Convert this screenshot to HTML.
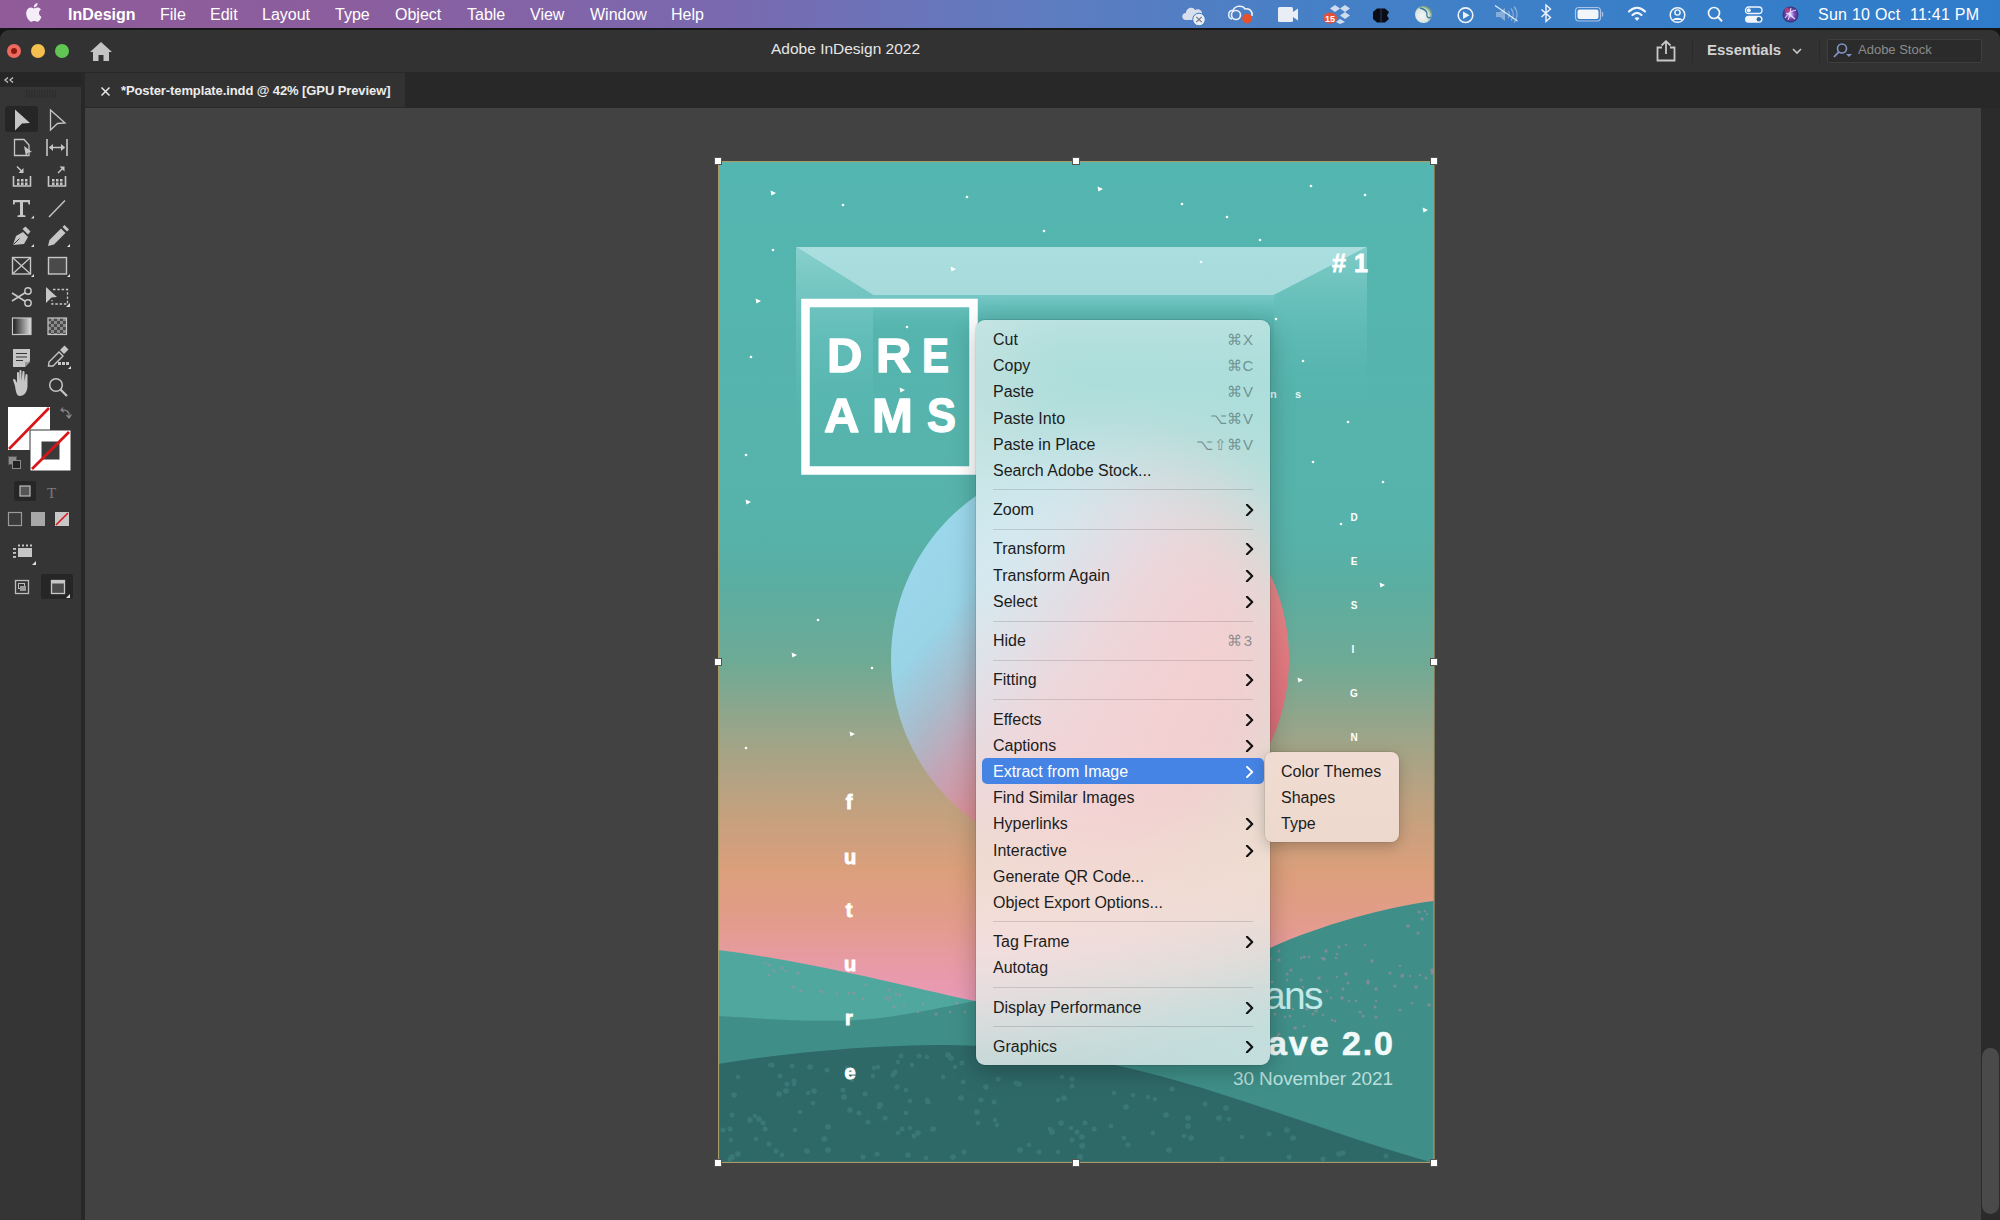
<!DOCTYPE html>
<html><head><meta charset="utf-8">
<style>
*{margin:0;padding:0;box-sizing:border-box}
html,body{width:2000px;height:1220px;overflow:hidden;background:#424242;font-family:"Liberation Sans",sans-serif}
.abs{position:absolute}
#menubar{left:0;top:0;width:2000px;height:28px;background:linear-gradient(90deg,#905b98 0%,#8b5e9e 18%,#7a69b0 36%,#5f7cc0 52%,#4680c6 66%,#3a7fc8 80%,#2f7ccb 100%)}
#menubar .mi{position:absolute;top:5px;color:#fff;font-size:16px;line-height:20px}
#titlebar{left:0;top:30px;width:2000px;height:42px;background:#323232;border-radius:9px 9px 0 0}
#mbline{left:0;top:28px;width:2000px;height:44px;background:#161616}
#tabbar{left:0;top:72px;width:2000px;height:36px;background:#282828}
#toolbar{left:0;top:87px;width:81px;height:1133px;background:#353535}
#tbhead{left:0;top:72px;width:81px;height:14px;background:#262626}
#tbborder{left:81px;top:73px;width:4px;height:1147px;background:#282828}
#tab{left:85px;top:73px;width:320px;height:34px;background:#323232}
#canvas{left:85px;top:108px;width:1896px;height:1112px;background:#424242}
#vscroll{left:1981px;top:108px;width:19px;height:1112px;background:#2b2b2b}
#menu{left:976px;top:320px;width:294px;height:745px;border-radius:9px;overflow:hidden;
 box-shadow:0 6px 24px rgba(0,0,0,.25),0 0 0 1px rgba(0,0,0,.08)}
#mwash{left:0;top:0;width:294px;height:745px;background:linear-gradient(180deg,rgba(246,248,248,0.58) 0%,rgba(246,246,246,0.66) 30%,rgba(246,246,246,0.7) 70%,rgba(248,250,250,0.74) 100%)}
.it{position:absolute;left:17px;width:260px;height:26px;font-size:16px;line-height:28px;color:#1c1c1c}
.sc{position:absolute;right:-2px;top:0;height:26px;color:rgba(40,70,70,0.5);font-size:15px;display:flex}.sc i{font-style:normal;display:block;width:14px;text-align:center}.sc i.o{width:17px}
.ch{position:absolute;right:-1px;top:8px;width:12px;height:12px}
.sep{position:absolute;left:17px;width:260px;height:1px;background:rgba(0,0,0,.13)}
#sub{left:1265px;top:752px;width:134px;height:90px;border-radius:8px;background:linear-gradient(180deg,#f0dcd2,#ecd8cc);box-shadow:0 4px 14px rgba(0,0,0,.22),0 0 0 1px rgba(0,0,0,.06)}
.hd{width:8px;height:8px;background:#fff;border:1px solid #555}
.tl{width:14px;height:14px;border-radius:7px}
#titlebar>*{margin-top:-1px}
</style></head><body>

<div id="menubar" class="abs">
<svg class="abs" style="left:0;top:0" width="2000" height="28" viewBox="0 0 2000 28">
<defs>
<radialGradient id="siri" cx="0.5" cy="0.5" r="0.5"><stop offset="0" stop-color="#e8e0ff"/><stop offset="0.5" stop-color="#7a4cc0"/><stop offset="1" stop-color="#3a3070"/></radialGradient>
<radialGradient id="globe" cx="0.4" cy="0.6" r="0.6"><stop offset="0" stop-color="#f4f4f4"/><stop offset="0.7" stop-color="#d8e6e0"/><stop offset="1" stop-color="#6a9a70"/></radialGradient>
</defs>
<path transform="translate(24.5,3) scale(0.78)" fill="#f5eef8" d="M12.152 6.896c-.948 0-2.415-1.078-3.96-1.04-2.04.027-3.91 1.183-4.961 3.014-2.117 3.675-.546 9.103 1.519 12.09 1.013 1.454 2.208 3.09 3.792 3.039 1.52-.065 2.09-.987 3.935-.987 1.831 0 2.35.987 3.96.948 1.637-.026 2.676-1.48 3.676-2.948 1.156-1.688 1.636-3.325 1.662-3.415-.039-.013-3.182-1.221-3.220-4.857-.026-3.040 2.480-4.494 2.597-4.559-1.429-2.090-3.623-2.324-4.390-2.376-2-.156-3.675 1.090-4.610 1.090zM15.530 3.830c.843-1.012 1.400-2.427 1.245-3.830-1.207.052-2.662.805-3.532 1.818-.780.896-1.454 2.338-1.273 3.714 1.338.104 2.715-.688 3.559-1.701"/>
<!-- cloud x -->
<path d="M1186,20 C1181,20 1181,13 1186,13 C1186,8 1193,6 1195,10 C1199,8 1203,11 1202,15 L1198,20Z" fill="#d7dfec"/>
<circle cx="1199" cy="19.5" r="6.3" fill="#e8ecf2" stroke="#3c7cc4" stroke-width="1"/>
<path d="M1196.3,16.8L1201.7,22.2M1201.7,16.8L1196.3,22.2" stroke="#6a7080" stroke-width="1.1"/>
<!-- cc -->
<path d="M1232,19 C1227,18 1228,10 1233,10.5 C1235,5 1243,5 1245,9 C1250,8 1253,12 1252,16" fill="none" stroke="#eef3fa" stroke-width="1.5"/>
<circle cx="1236" cy="15" r="4.5" fill="none" stroke="#eef3fa" stroke-width="1.6"/>
<circle cx="1247" cy="18.6" r="4.8" fill="#e8502a"/>
<!-- camera -->
<rect x="1278" y="7" width="15" height="15" rx="1.5" fill="#e9eef6"/>
<path d="M1293,12 L1298,8.5 L1298,20.5 L1293,17Z" fill="#e9eef6"/>
<!-- dropbox -->
<g fill="#cfdcef"><path d="M1335,5 L1340,8.5 L1335,12 L1330,8.5Z"/><path d="M1345,5 L1350,8.5 L1345,12 L1340,8.5Z"/><path d="M1345,12 L1350,15.5 L1345,19 L1340,15.5Z"/><path d="M1340,19 L1345,22 L1340,24 L1336,22Z"/></g>
<ellipse cx="1330" cy="18" rx="7" ry="5.5" fill="#e0503a"/>
<text x="1330" y="21.5" font-size="9" font-weight="bold" fill="#fff" text-anchor="middle" font-family="Liberation Sans">15</text>
<!-- shield -->
<path d="M1377,8.5 L1385,8.5 L1389,12 L1387,15.5 L1389,19 L1385,22.5 L1377,22.5 L1373,19 L1373,12Z" fill="#0c0c14"/>
<path d="M1381,9 L1381,22" stroke="#2a3b60" stroke-width="1"/>
<!-- globe -->
<circle cx="1423.6" cy="14.3" r="8.6" fill="url(#globe)"/>
<path d="M1420,8 C1424,9 1427,11 1427,14 C1426,17 1429,19 1431,17" fill="none" stroke="#3a7a9a" stroke-width="1.3"/>
<!-- play -->
<circle cx="1465.5" cy="15.2" r="7.3" fill="none" stroke="#eef4fb" stroke-width="1.6"/>
<path d="M1463,11.5 L1469.5,15.2 L1463,19Z" fill="#eef4fb"/>
<!-- muted speaker -->
<g opacity="0.45" fill="#dfe8f5"><path d="M1496,12 L1500,12 L1505,8 L1505,21 L1500,17 L1496,17Z"/></g>
<g opacity="0.45" fill="none" stroke="#dfe8f5" stroke-width="1.2"><path d="M1508,11 C1510,13 1510,16 1508,18"/><path d="M1511,8.5 C1514,12 1514,17 1511,20.5"/><path d="M1514,6.5 C1518,11 1518,18 1514,22.5"/></g>
<path d="M1495,5.5 L1517.5,21" stroke="#e6eef8" stroke-width="1.1"/>
<!-- bluetooth -->
<path d="M1541.5,9.5 L1550.5,17.5 L1546,21.5 L1546,5 L1550.5,9 L1541.5,17" fill="none" stroke="#f0f5fb" stroke-width="1.4"/>
<!-- battery -->
<rect x="1575.5" y="7.5" width="25" height="13.5" rx="3.5" fill="none" stroke="#a9c4e6" stroke-width="1.2"/>
<rect x="1577.5" y="9.5" width="21" height="9.5" rx="2" fill="#f2f5fa"/>
<path d="M1602.5,12 L1602.5,16.5" stroke="#a9c4e6" stroke-width="1.3"/>
<!-- wifi -->
<g fill="none" stroke="#f2f6fb" stroke-width="2.2" stroke-linecap="round"><path d="M1629,11.5 C1634,6.5 1640,6.5 1645,11.5"/><path d="M1632.5,15 C1635.5,12 1638.5,12 1641.5,15"/></g>
<path d="M1637,21 L1634.5,18 C1636,17 1638,17 1639.5,18Z" fill="#f2f6fb"/>
<!-- user -->
<circle cx="1677.5" cy="15" r="7.3" fill="none" stroke="#f2f6fb" stroke-width="1.5"/>
<circle cx="1677.5" cy="12.5" r="2.6" fill="none" stroke="#f2f6fb" stroke-width="1.4"/>
<path d="M1672.5,20 C1674,17 1681,17 1682.5,20" fill="#f2f6fb"/>
<!-- search -->
<circle cx="1714" cy="13" r="5.5" fill="none" stroke="#f2f6fb" stroke-width="1.7"/>
<path d="M1718,17 L1721.5,20.8" stroke="#f2f6fb" stroke-width="2" stroke-linecap="round"/>
<!-- control center -->
<rect x="1745.5" y="7" width="16.5" height="6.5" rx="3.25" fill="none" stroke="#f2f6fb" stroke-width="1.3"/>
<circle cx="1748.8" cy="10.2" r="2" fill="#f2f6fb"/>
<rect x="1745" y="15.8" width="17.5" height="7" rx="3.5" fill="#f2f6fb"/>
<circle cx="1758.8" cy="19.3" r="2.2" fill="#2d6aa8"/>
<!-- siri -->
<circle cx="1790.5" cy="14.5" r="8" fill="url(#siri)"/>
<path d="M1785,18 C1789,12 1792,11 1796,10 M1786,13 C1790,15 1793,17 1795,19 M1791,8 C1790,12 1790,16 1788,20" stroke="#f6ecff" stroke-width="1.1" fill="none" opacity="0.85"/>
<circle cx="1787" cy="10" r="2.5" fill="#e04070" opacity="0.6"/>
</svg>

  <span class="mi" style="left:68px;font-weight:bold">InDesign</span>
  <span class="mi" style="left:160px">File</span>
  <span class="mi" style="left:210px">Edit</span>
  <span class="mi" style="left:262px">Layout</span>
  <span class="mi" style="left:335px">Type</span>
  <span class="mi" style="left:395px">Object</span>
  <span class="mi" style="left:467px">Table</span>
  <span class="mi" style="left:530px">View</span>
  <span class="mi" style="left:590px">Window</span>
  <span class="mi" style="left:671px">Help</span>
  <span class="mi" style="left:1818px;letter-spacing:0.25px">Sun 10 Oct&nbsp; 11:41 PM</span>
</div>
<div id="mbline" class="abs"></div>
<div id="titlebar" class="abs">
  <div class="abs tl" style="left:7px;top:15px;background:#ee6a5f"><div style="position:absolute;left:4px;top:4px;width:6px;height:6px;border-radius:3px;background:#8c1a10"></div></div>
  <div class="abs tl" style="left:31px;top:15px;background:#f5bf4f"></div>
  <div class="abs tl" style="left:55px;top:15px;background:#61c554"></div>
  <svg class="abs" style="left:89px;top:12px" width="24" height="22" viewBox="0 0 24 22"><path d="M12,1 L23,11 L20,11 L20,20 L14.5,20 L14.5,14 L9.5,14 L9.5,20 L4,20 L4,11 L1,11 Z" fill="#c4c4c4"/></svg>
  <div class="abs" style="left:771px;top:10px;font-size:15.5px;color:#e6e6e6;line-height:20px">Adobe InDesign 2022</div>
  <svg class="abs" style="left:1654px;top:11px" width="24" height="22" viewBox="0 0 24 22"><path d="M8,7.5 L3.5,7.5 L3.5,20.5 L20.5,20.5 L20.5,7.5 L16,7.5 M12,14 L12,1.5 M7.5,5.5 L12,1.2 L16.5,5.5" fill="none" stroke="#c8c8c8" stroke-width="1.8"/></svg>
  <div class="abs" style="left:1692px;top:10px;width:1px;height:24px;background:#2a2a2a"></div>
  <div class="abs" style="left:1707px;top:11px;font-size:15px;font-weight:bold;color:#d2d2d2;line-height:20px">Essentials</div>
  <svg class="abs" style="left:1791px;top:17px" width="12" height="10" viewBox="0 0 12 10"><path d="M2,3 L6,7 L10,3" fill="none" stroke="#c8c8c8" stroke-width="1.6"/></svg>
  <div class="abs" style="left:1819px;top:10px;width:1px;height:24px;background:#2a2a2a"></div>
  <div class="abs" style="left:1827px;top:10px;width:155px;height:24px;border:1px solid #3e3e3e;border-radius:2px;background:#2b2b2b"></div>
  <svg class="abs" style="left:1832px;top:13px" width="22" height="18" viewBox="0 0 22 18"><circle cx="10" cy="6.5" r="4.5" fill="none" stroke="#7f95c8" stroke-width="1.6"/><path d="M6.8,9.8 L2,15" stroke="#7f95c8" stroke-width="1.8"/><path d="M14,12 L20,12 L17,15Z" fill="#7f95c8"/></svg>
  <div class="abs" style="left:1858px;top:13px;font-size:13px;color:#8c8c8c;line-height:16px">Adobe Stock</div>
</div>
<div id="tabbar" class="abs"></div>
<div id="tbhead" class="abs"><svg class="abs" style="left:3px;top:4px" width="12" height="8" viewBox="0 0 12 8"><path d="M5,1.5L2,4L5,6.5M10,1.5L7,4L10,6.5" fill="none" stroke="#c4c4c4" stroke-width="1.3"/></svg></div>
<div id="toolbar" class="abs"></div>
<svg class="abs" style="left:0;top:87px" width="82" height="540" viewBox="0 87 82 540">
<defs>
<linearGradient id="gsw" x1="0" y1="0" x2="1" y2="0"><stop offset="0" stop-color="#1a1a1a"/><stop offset="1" stop-color="#e0e0e0"/></linearGradient>
<pattern id="chk" width="6" height="6" patternUnits="userSpaceOnUse" x="48" y="318"><rect width="6" height="6" fill="#8a8a8a"/><rect width="3" height="3" fill="#4a4a4a"/><rect x="3" y="3" width="3" height="3" fill="#4a4a4a"/></pattern>
</defs>
<g fill="#c6c6c6" stroke="#c6c6c6">
<rect x="5" y="106" width="33" height="26" rx="3" fill="#262626" stroke="none"/>
<path d="M15,109.5 L30,123 L22,123.5 L15,130.5Z" stroke="none"/>
<path d="M50.5,110 L65,123 L57.5,123.5 L50.5,130Z" fill="none" stroke-width="1.3"/>
<!-- page tool -->
<path d="M14.5,139.5 L24,139.5 L29,145 L29,155.5 L14.5,155.5Z" fill="none" stroke-width="1.3"/>
<path d="M24,146 L32,152 L28,152.5 L26,156.5Z" stroke="none"/>
<!-- gap tool -->
<path d="M47,139 L47,156 M67,139 L67,156 M49.5,147.5 L64.5,147.5" fill="none" stroke-width="1.6"/>
<path d="M49,147.5 L53,144 L53,151Z M65,147.5 L61,144 L61,151Z" stroke="none"/>
<!-- content collector -->
<path d="M13.5,176 L13.5,186 L30.5,186 L30.5,176" fill="none" stroke-width="1.6"/>
<g stroke="none"><rect x="17" y="179" width="2.5" height="2.5"/><rect x="21" y="179" width="2.5" height="2.5"/><rect x="25" y="179" width="2.5" height="2.5"/><rect x="17" y="182.5" width="2.5" height="2.5"/><rect x="21" y="182.5" width="2.5" height="2.5"/><rect x="25" y="182.5" width="2.5" height="2.5"/></g>
<path d="M17,166.5 L22.5,172" fill="none" stroke-width="1.5"/><path d="M23.5,173 L23.5,168 L18.5,173Z" stroke="none"/>
<path d="M48.5,176 L48.5,186 L65.5,186 L65.5,176" fill="none" stroke-width="1.6"/>
<g stroke="none"><rect x="52" y="179" width="2.5" height="2.5"/><rect x="56" y="179" width="2.5" height="2.5"/><rect x="60" y="179" width="2.5" height="2.5"/><rect x="52" y="182.5" width="2.5" height="2.5"/><rect x="56" y="182.5" width="2.5" height="2.5"/><rect x="60" y="182.5" width="2.5" height="2.5"/></g>
<path d="M58,173 L63.5,167.5" fill="none" stroke-width="1.5"/><path d="M64.5,166.5 L64.5,171.5 L59.5,166.5Z" stroke="none"/>
<!-- type -->
<path d="M13,200 L30,200 L30,204.5 L28.5,204.5 L28,202.3 L23,202.3 L23,215 L25.5,215.5 L25.5,217 L17.5,217 L17.5,215.5 L20,215 L20,202.3 L15,202.3 L14.5,204.5 L13,204.5Z" stroke="none"/>
<path d="M31,218.5 L34,215.5 L34,218.5Z" stroke="none" fill="#e0e0e0"/>
<path d="M49,217 L65,200.5" fill="none" stroke-width="1.4"/>
<!-- pen -->
<path d="M13,245 L16,236 L23,232 L28,237 L24,244Z" stroke="none"/>
<path d="M22.5,229 L25.5,226.5 L30.5,231.5 L28,234.5Z" stroke="none"/>
<path d="M13.5,244.5 L19.5,238.5" stroke="#353535" stroke-width="1"/>
<path d="M31,247 L34,244 L34,247Z" stroke="none" fill="#e0e0e0"/>
<!-- pencil -->
<path d="M48,246 L49.5,240 L61,228.5 L65.5,233 L54,244.5Z" stroke="none"/>
<path d="M62.5,227 L64.5,225 L69,229.5 L67,231.5Z" stroke="none"/>
<path d="M67,247 L70,244 L70,247Z" stroke="none" fill="#e0e0e0"/>
<!-- rect frame -->
<rect x="12.5" y="257.5" width="18" height="16.5" fill="none" stroke-width="1.4"/>
<path d="M12.5,257.5 L30.5,274 M30.5,257.5 L12.5,274" fill="none" stroke-width="1.3"/>
<path d="M31,277 L34,274 L34,277Z" stroke="none" fill="#e0e0e0"/>
<rect x="48.5" y="257.5" width="18" height="16.5" fill="#4a4a4a" stroke-width="1.4"/>
<path d="M67,277 L70,274 L70,277Z" stroke="none" fill="#e0e0e0"/>
<!-- scissors -->
<circle cx="28" cy="291" r="3.2" fill="none" stroke-width="1.4"/><circle cx="28" cy="303" r="3.2" fill="none" stroke-width="1.4"/>
<path d="M12,293 L25.5,301.5 M12,301 L25.5,292.5" fill="none" stroke-width="1.7"/>
<!-- free transform -->
<path d="M46,287 L57,297 L51.5,297.5 L46,303Z" stroke="none"/>
<path d="M53,289.5 L67.5,289.5 L67.5,304 L52,304 L52,300" fill="none" stroke-width="1.3" stroke-dasharray="2.5,1.8"/>
<path d="M66,307 L70,303 L70,307Z" stroke="none" fill="#e0e0e0"/>
<!-- gradient swatch -->
<rect x="12.5" y="318" width="18.5" height="16.5" fill="url(#gsw)" stroke-width="1.2"/>
<rect x="48" y="318" width="18.5" height="16.5" fill="url(#chk)" stroke-width="1.2"/>
<!-- note -->
<path d="M13,349 L30,349 L30,361 L25,367 L13,367Z" stroke="none"/>
<path d="M16,353.5 L27,353.5 M16,357 L27,357 M16,360.5 L23,360.5" stroke="#353535" stroke-width="1.2"/>
<path d="M25,367 L25,362 L30,362Z" stroke="none" fill="#9a9a9a"/>
<!-- eyedropper -->
<path d="M48.5,366 L49,362 L59,352 L63,356 L53,366Z" fill="none" stroke-width="1.4"/>
<path d="M60,350 L64.5,345.5 L68.5,349.5 L64,354Z" stroke="none"/>
<g stroke="none"><rect x="58" y="362" width="3" height="3"/><rect x="62" y="362" width="3" height="3"/><rect x="66" y="362" width="3" height="3"/></g>
<path d="M68,369 L71,366 L71,369Z" stroke="none" fill="#e0e0e0"/>
<!-- hand -->
<path d="M15,386 L13,380 C13,378.5 15,378.5 15.5,380 L17,383 L17,373 C17,371.5 19,371.5 19,373 L19,381 L19.5,371 C19.5,369.5 21.5,369.5 21.5,371 L21.5,381 L22.5,372 C22.5,370.5 24.5,370.5 24.5,372 L24.5,381.5 L25.5,375 C25.5,373.5 27.5,373.5 27.5,375 L27.5,386 C27.5,392 24,396 20,396 C17,396 16,393 15,386Z" stroke="none"/>
<!-- zoom -->
<circle cx="56" cy="385" r="6.3" fill="none" stroke-width="1.5"/>
<path d="M60.5,389.5 L67,396" fill="none" stroke-width="2.2"/>
</g>
<!-- fill / stroke -->
<rect x="8" y="407" width="42" height="43" fill="#fff"/>
<path d="M9,449 L49,408" stroke="#d8151b" stroke-width="2.6"/>
<rect x="30" y="430" width="41" height="41" fill="#fff" stroke="#353535" stroke-width="1"/>
<rect x="41.5" y="441.5" width="18" height="18" fill="#3a3a3a"/>
<path d="M32,469 L69,432" stroke="#d8151b" stroke-width="2.6"/>
<path d="M62,410 C66,409 70,412 69,417 M66.5,415 L69,418 L71.5,414.5 M63,407.5 L61,410 L64,412" fill="none" stroke="#8a8a8a" stroke-width="1.2"/>
<rect x="8.5" y="456.5" width="8" height="8" fill="#8a8a8a" stroke="#555" stroke-width="1"/>
<rect x="12.5" y="460.5" width="8" height="8" fill="#222" stroke="#8a8a8a" stroke-width="1"/>
<!-- formatting -->
<rect x="14" y="481" width="22" height="20" rx="2" fill="#262626"/>
<rect x="20" y="486" width="10" height="10" fill="#555" stroke="#bbb" stroke-width="1.2"/>
<text x="47" y="498" font-family="Liberation Serif" font-size="15" fill="#7a7a7a">T</text>
<!-- apply color -->
<rect x="8.5" y="512.5" width="13" height="13" fill="#3a3a3a" stroke="#9a9a9a" stroke-width="1.2"/>
<rect x="31" y="512" width="14" height="14" fill="#a8a8a8"/>
<rect x="55" y="512" width="14" height="14" fill="#c8c8c8"/>
<path d="M56,525 L68,513" stroke="#d8151b" stroke-width="1.6"/>
<!-- screen mode -->
<g fill="#c6c6c6"><rect x="18" y="548" width="14" height="9"/><rect x="13" y="548" width="3" height="1.8"/><rect x="13" y="552" width="3" height="1.8"/><rect x="13" y="556" width="3" height="1.8"/><rect x="18" y="544.5" width="2" height="2"/><rect x="22" y="544.5" width="2" height="2"/><rect x="26" y="544.5" width="2" height="2"/><rect x="30" y="544.5" width="2" height="2"/></g>
<path d="M32,565 L36,561 L36,565Z" fill="#e0e0e0"/>
<!-- view -->
<rect x="15.5" y="580.5" width="13" height="13" fill="none" stroke="#bcbcbc" stroke-width="1.3"/>
<rect x="18.5" y="583.5" width="6" height="5" fill="none" stroke="#bcbcbc" stroke-width="1"/><rect x="20" y="586" width="6" height="5" fill="#9a9a9a"/>
<rect x="41" y="574" width="32" height="25" rx="2" fill="#262626"/>
<rect x="51.5" y="580.5" width="13" height="13" fill="#4a4a4a" stroke="#c6c6c6" stroke-width="1.3"/>
<rect x="51.5" y="580.5" width="13" height="3" fill="#c6c6c6"/>
<path d="M66,598 L70,594 L70,598Z" fill="#e0e0e0"/>
</svg>

<svg class="abs" style="left:0;top:87px" width="81" height="14" viewBox="0 87 81 14"><rect x="26.0" y="90" width="1.2" height="8" fill="#2d2d2d"/><rect x="28.6" y="90" width="1.2" height="8" fill="#2d2d2d"/><rect x="31.2" y="90" width="1.2" height="8" fill="#2d2d2d"/><rect x="33.8" y="90" width="1.2" height="8" fill="#2d2d2d"/><rect x="36.4" y="90" width="1.2" height="8" fill="#2d2d2d"/><rect x="39.0" y="90" width="1.2" height="8" fill="#2d2d2d"/><rect x="41.6" y="90" width="1.2" height="8" fill="#2d2d2d"/><rect x="44.2" y="90" width="1.2" height="8" fill="#2d2d2d"/><rect x="46.8" y="90" width="1.2" height="8" fill="#2d2d2d"/><rect x="49.4" y="90" width="1.2" height="8" fill="#2d2d2d"/><rect x="52.0" y="90" width="1.2" height="8" fill="#2d2d2d"/><rect x="54.6" y="90" width="1.2" height="8" fill="#2d2d2d"/></svg>
<div id="tbborder" class="abs"></div>
<div id="tab" class="abs">
  <svg class="abs" style="left:15px;top:13px" width="11" height="11" viewBox="0 0 11 11"><path d="M1.5,1.5L9.5,9.5M9.5,1.5L1.5,9.5" stroke="#eaeaea" stroke-width="1.5"/></svg>
  <div class="abs" style="left:36px;top:10px;font-size:13px;font-weight:bold;color:#ececec;line-height:16px;letter-spacing:-0.1px">*Poster-template.indd @ 42% [GPU Preview]</div>
</div>
<div id="canvas" class="abs"></div>
<div id="vscroll" class="abs"><div class="abs" style="left:1px;top:940px;width:17px;height:166px;border-radius:8.5px;background:#4a4a4a"></div></div>

<!-- POSTER -->
<svg class="abs" style="left:718px;top:161px" width="717" height="1002" viewBox="718 161 717 1002">
<defs>
<linearGradient id="bg" x1="0" y1="0" x2="0" y2="1">
<stop offset="0" stop-color="#54b6b1"/><stop offset="0.36" stop-color="#56b3ab"/><stop offset="0.42" stop-color="#5aaea2"/>
<stop offset="0.50" stop-color="#6eaa95"/><stop offset="0.58" stop-color="#a0a487"/><stop offset="0.65" stop-color="#c3a17f"/><stop offset="0.71" stop-color="#dc9f7b"/>
<stop offset="0.76" stop-color="#e39c8c"/><stop offset="0.81" stop-color="#e89aaa"/><stop offset="0.86" stop-color="#ea9ac2"/><stop offset="1" stop-color="#ea9ac2"/>
</linearGradient>
<linearGradient id="topband" x1="0" y1="0" x2="0" y2="1"><stop offset="0" stop-color="#aadedf"/><stop offset="1" stop-color="#a6dadb"/></linearGradient>
<linearGradient id="lwall" x1="0" y1="0" x2="0" y2="1"><stop offset="0" stop-color="#88d0cd"/><stop offset="0.35" stop-color="#66bfbb" stop-opacity="0.7"/><stop offset="0.75" stop-color="#56b6b1" stop-opacity="0"/></linearGradient>
<linearGradient id="rwall" x1="0" y1="0" x2="0" y2="1"><stop offset="0" stop-color="#80ccc9"/><stop offset="0.25" stop-color="#6cc2be" stop-opacity="0.6"/><stop offset="0.6" stop-color="#56b6b1" stop-opacity="0"/></linearGradient>
<linearGradient id="under" x1="0" y1="0" x2="0" y2="1"><stop offset="0" stop-color="#76c8c5"/><stop offset="1" stop-color="#56b6b1" stop-opacity="0"/></linearGradient>
<linearGradient id="circ" x1="0.1" y1="0.15" x2="0.9" y2="0.85">
<stop offset="0" stop-color="#9cd8ec"/><stop offset="0.18" stop-color="#98d3e6"/><stop offset="0.3" stop-color="#a9bccc"/><stop offset="0.42" stop-color="#c6a2b2"/><stop offset="0.55" stop-color="#dd8c93"/><stop offset="0.7" stop-color="#e6898a"/><stop offset="0.85" stop-color="#e27a80"/><stop offset="1" stop-color="#d86a78"/>
</linearGradient>
</defs>
<g id="pbase">
<rect x="718" y="161" width="716" height="1002" fill="url(#bg)"/>
<!-- box -->
<path d="M796,247L1367,247L1274,295L873,295Z" fill="url(#topband)"/>
<path d="M796,247L873,295L873,520L796,520Z" fill="url(#lwall)"/>
<path d="M1367,247L1274,295L1274,520L1367,520Z" fill="url(#rwall)"/>
<rect x="873" y="295" width="401" height="40" fill="url(#under)"/>
<!-- circle -->
<circle cx="1090" cy="659" r="199" fill="url(#circ)"/>
<!-- hills -->
<path d="M718,950 C800,960 890,982 960,998 L1000,1006 L1000,1163 L718,1163Z" fill="#4fa79e"/>
<path d="M718,1016 C770,1019 830,1024 880,1018 C940,1010 980,998 1040,990 C1120,978 1200,962 1270,948 C1320,925 1390,906 1434,901 L1434,1163 L718,1163Z" fill="#3f8f88"/>
<g fill="#b28c9c" opacity="0.55"><circle cx="1313" cy="1014" r="1.5"/><circle cx="1290" cy="1016" r="1.5"/><circle cx="1360" cy="1012" r="1.5"/><circle cx="1293" cy="1009" r="1.2"/><circle cx="1322" cy="958" r="1.2"/><circle cx="1416" cy="987" r="1.8"/><circle cx="1304" cy="957" r="1.5"/><circle cx="1316" cy="1011" r="1.8"/><circle cx="1400" cy="1010" r="1.5"/><circle cx="1336" cy="958" r="1.2"/><circle cx="1291" cy="970" r="1.5"/><circle cx="1429" cy="1005" r="1.8"/><circle cx="1410" cy="976" r="1.2"/><circle cx="1295" cy="1028" r="1.8"/><circle cx="1376" cy="1001" r="1.2"/><circle cx="1270" cy="959" r="1.2"/><circle cx="1376" cy="989" r="1.8"/><circle cx="1342" cy="998" r="1.8"/><circle cx="1301" cy="958" r="1.2"/><circle cx="1272" cy="1038" r="1.8"/><circle cx="1408" cy="926" r="1.8"/><circle cx="1311" cy="994" r="1.5"/><circle cx="1279" cy="960" r="1.8"/><circle cx="1339" cy="947" r="1.5"/><circle cx="1307" cy="1009" r="1.8"/><circle cx="1335" cy="1021" r="1.2"/><circle cx="1304" cy="1026" r="1.2"/><circle cx="1346" cy="945" r="1.2"/><circle cx="1426" cy="978" r="1.5"/><circle cx="1419" cy="912" r="1.5"/><circle cx="1279" cy="951" r="1.5"/><circle cx="1279" cy="1034" r="1.5"/><circle cx="1390" cy="973" r="1.5"/><circle cx="1301" cy="980" r="1.5"/><circle cx="1275" cy="1014" r="1.5"/><circle cx="1343" cy="989" r="1.5"/><circle cx="1427" cy="914" r="1.2"/><circle cx="1332" cy="1020" r="1.2"/><circle cx="1278" cy="1035" r="1.2"/><circle cx="1323" cy="1015" r="1.2"/><circle cx="1403" cy="975" r="1.2"/><circle cx="1402" cy="976" r="1.8"/><circle cx="1326" cy="951" r="1.8"/><circle cx="1277" cy="992" r="1.5"/><circle cx="1319" cy="978" r="1.8"/><circle cx="1425" cy="911" r="1.2"/><circle cx="1348" cy="983" r="1.5"/><circle cx="1400" cy="966" r="1.2"/><circle cx="1422" cy="919" r="1.8"/><circle cx="1320" cy="999" r="1.5"/><circle cx="1346" cy="974" r="1.8"/><circle cx="1302" cy="996" r="1.2"/><circle cx="1349" cy="1001" r="1.2"/><circle cx="1432" cy="971" r="1.5"/><circle cx="1432" cy="973" r="1.5"/><circle cx="1372" cy="961" r="1.8"/><circle cx="1395" cy="986" r="1.5"/><circle cx="1331" cy="998" r="1.2"/><circle cx="1309" cy="957" r="1.2"/><circle cx="1324" cy="959" r="1.8"/><circle cx="1356" cy="1001" r="1.2"/><circle cx="1287" cy="974" r="1.5"/><circle cx="1420" cy="975" r="1.2"/><circle cx="1368" cy="983" r="1.8"/><circle cx="1412" cy="1003" r="1.2"/><circle cx="1287" cy="980" r="1.2"/><circle cx="1276" cy="1039" r="1.2"/><circle cx="1368" cy="981" r="1.5"/><circle cx="1337" cy="954" r="1.2"/><circle cx="1303" cy="987" r="1.2"/><circle cx="1337" cy="977" r="1.2"/><circle cx="1375" cy="1007" r="1.5"/><circle cx="1432" cy="970" r="1.8"/><circle cx="1363" cy="1016" r="1.5"/><circle cx="1376" cy="1017" r="1.5"/><circle cx="1418" cy="933" r="1.5"/><circle cx="1365" cy="945" r="1.2"/><circle cx="1272" cy="982" r="1.5"/><circle cx="1285" cy="1017" r="1.2"/><circle cx="1327" cy="991" r="1.5"/><circle cx="863" cy="999" r="1.2"/><circle cx="823" cy="992" r="1.2"/><circle cx="965" cy="1012" r="1.2"/><circle cx="888" cy="1000" r="1.2"/><circle cx="950" cy="1012" r="1.2"/><circle cx="894" cy="1007" r="1.5"/><circle cx="889" cy="990" r="1.5"/><circle cx="798" cy="973" r="1.5"/><circle cx="957" cy="1003" r="1.5"/><circle cx="786" cy="971" r="1.2"/><circle cx="769" cy="975" r="1.2"/><circle cx="900" cy="995" r="1.5"/><circle cx="886" cy="998" r="1.5"/><circle cx="896" cy="994" r="1.2"/><circle cx="849" cy="993" r="1.5"/><circle cx="866" cy="985" r="1.2"/><circle cx="890" cy="997" r="1.2"/><circle cx="854" cy="993" r="1.5"/><circle cx="936" cy="1014" r="1.5"/><circle cx="782" cy="968" r="1.5"/><circle cx="837" cy="994" r="1.2"/><circle cx="769" cy="965" r="1.5"/><circle cx="923" cy="1004" r="1.2"/><circle cx="918" cy="1012" r="1.2"/><circle cx="765" cy="963" r="1.2"/><circle cx="801" cy="991" r="1.5"/><circle cx="820" cy="991" r="1.2"/><circle cx="904" cy="1005" r="1.2"/><circle cx="774" cy="971" r="1.5"/><circle cx="793" cy="987" r="1.5"/></g>
<path d="M718,1064 C780,1054 860,1045 950,1045 C1030,1046 1100,1060 1160,1076 C1250,1100 1350,1140 1434,1163 L718,1163Z" fill="#2e6968"/>
<rect x="805.5" y="303" width="168" height="167.5" fill="none" stroke="#fff" stroke-width="8.5"/>
</g>
<g fill="#4a8c89" opacity="0.45"><circle cx="951" cy="1058" r="2.8"/><circle cx="756" cy="1139" r="2.2"/><circle cx="786" cy="1091" r="2.8"/><circle cx="810" cy="1067" r="2.8"/><circle cx="879" cy="1107" r="2.2"/><circle cx="927" cy="1057" r="2.2"/><circle cx="1126" cy="1107" r="2.8"/><circle cx="850" cy="1110" r="2.8"/><circle cx="1226" cy="1108" r="2.8"/><circle cx="868" cy="1122" r="2.5"/><circle cx="898" cy="1062" r="2.2"/><circle cx="780" cy="1076" r="2.5"/><circle cx="926" cy="1158" r="2.2"/><circle cx="964" cy="1152" r="2.5"/><circle cx="750" cy="1120" r="2.8"/><circle cx="1128" cy="1145" r="2.5"/><circle cx="963" cy="1082" r="2.5"/><circle cx="1133" cy="1095" r="2.2"/><circle cx="1219" cy="1118" r="2.8"/><circle cx="995" cy="1120" r="2.2"/><circle cx="1155" cy="1099" r="2.2"/><circle cx="897" cy="1087" r="2.5"/><circle cx="779" cy="1094" r="2.8"/><circle cx="919" cy="1056" r="2.5"/><circle cx="1016" cy="1083" r="2.5"/><circle cx="847" cy="1068" r="2.2"/><circle cx="731" cy="1140" r="2.2"/><circle cx="1019" cy="1084" r="2.8"/><circle cx="948" cy="1055" r="2.8"/><circle cx="1339" cy="1154" r="2.8"/><circle cx="770" cy="1065" r="2.2"/><circle cx="800" cy="1112" r="2.2"/><circle cx="794" cy="1084" r="2.2"/><circle cx="772" cy="1065" r="2.5"/><circle cx="827" cy="1070" r="2.5"/><circle cx="1148" cy="1097" r="2.2"/><circle cx="1323" cy="1159" r="2.5"/><circle cx="1062" cy="1077" r="2.2"/><circle cx="794" cy="1081" r="2.5"/><circle cx="1061" cy="1123" r="2.8"/><circle cx="738" cy="1154" r="2.8"/><circle cx="978" cy="1123" r="2.2"/><circle cx="880" cy="1105" r="2.8"/><circle cx="955" cy="1067" r="2.2"/><circle cx="1293" cy="1138" r="2.8"/><circle cx="1071" cy="1128" r="2.2"/><circle cx="859" cy="1113" r="2.5"/><circle cx="1039" cy="1152" r="2.5"/><circle cx="878" cy="1067" r="2.2"/><circle cx="961" cy="1098" r="2.8"/><circle cx="1184" cy="1136" r="2.2"/><circle cx="997" cy="1125" r="2.2"/><circle cx="1289" cy="1157" r="2.5"/><circle cx="1050" cy="1129" r="2.2"/><circle cx="825" cy="1139" r="2.5"/><circle cx="732" cy="1157" r="2.8"/><circle cx="795" cy="1130" r="2.2"/><circle cx="1029" cy="1145" r="2.2"/><circle cx="1077" cy="1132" r="2.5"/><circle cx="906" cy="1090" r="2.2"/><circle cx="765" cy="1129" r="2.5"/><circle cx="1191" cy="1138" r="2.8"/><circle cx="1020" cy="1150" r="2.8"/><circle cx="1083" cy="1145" r="2.2"/><circle cx="1153" cy="1133" r="2.2"/><circle cx="844" cy="1097" r="2.8"/><circle cx="1205" cy="1104" r="2.5"/><circle cx="918" cy="1133" r="2.8"/><circle cx="953" cy="1157" r="2.8"/><circle cx="1085" cy="1123" r="2.5"/><circle cx="1082" cy="1137" r="2.8"/><circle cx="1343" cy="1153" r="2.5"/><circle cx="865" cy="1094" r="2.5"/><circle cx="808" cy="1093" r="2.2"/><circle cx="873" cy="1076" r="2.2"/><circle cx="1229" cy="1119" r="2.2"/><circle cx="901" cy="1056" r="2.5"/><circle cx="877" cy="1154" r="2.5"/><circle cx="1222" cy="1159" r="2.5"/><circle cx="962" cy="1063" r="2.5"/><circle cx="787" cy="1084" r="2.5"/><circle cx="1114" cy="1093" r="2.2"/><circle cx="994" cy="1102" r="2.5"/><circle cx="814" cy="1091" r="2.8"/><circle cx="828" cy="1150" r="2.8"/><circle cx="1072" cy="1079" r="2.5"/><circle cx="763" cy="1123" r="2.5"/><circle cx="906" cy="1113" r="2.2"/><circle cx="769" cy="1144" r="2.5"/><circle cx="730" cy="1159" r="2.5"/><circle cx="813" cy="1103" r="2.2"/><circle cx="1386" cy="1156" r="2.5"/><circle cx="943" cy="1077" r="2.2"/><circle cx="927" cy="1100" r="2.2"/><circle cx="914" cy="1136" r="2.5"/><circle cx="1080" cy="1157" r="2.8"/><circle cx="1058" cy="1152" r="2.2"/><circle cx="1188" cy="1118" r="2.8"/><circle cx="1072" cy="1140" r="2.5"/><circle cx="874" cy="1068" r="2.2"/><circle cx="1172" cy="1089" r="2.5"/><circle cx="732" cy="1115" r="2.5"/><circle cx="1080" cy="1157" r="2.8"/><circle cx="893" cy="1075" r="2.5"/><circle cx="853" cy="1072" r="2.2"/><circle cx="908" cy="1155" r="2.8"/><circle cx="852" cy="1080" r="2.2"/><circle cx="1058" cy="1100" r="2.2"/><circle cx="898" cy="1133" r="2.2"/><circle cx="738" cy="1077" r="2.2"/><circle cx="782" cy="1155" r="2.2"/><circle cx="1188" cy="1126" r="2.8"/><circle cx="998" cy="1079" r="2.5"/><circle cx="828" cy="1127" r="2.8"/><circle cx="824" cy="1139" r="2.8"/><circle cx="1242" cy="1137" r="2.2"/><circle cx="1124" cy="1138" r="2.2"/><circle cx="1166" cy="1115" r="2.8"/><circle cx="895" cy="1072" r="2.5"/><circle cx="1287" cy="1130" r="2.8"/><circle cx="1094" cy="1129" r="2.5"/><circle cx="910" cy="1128" r="2.2"/><circle cx="885" cy="1118" r="2.5"/><circle cx="1072" cy="1086" r="2.5"/><circle cx="755" cy="1116" r="2.2"/><circle cx="902" cy="1129" r="2.5"/><circle cx="1064" cy="1098" r="2.8"/><circle cx="792" cy="1066" r="2.5"/><circle cx="928" cy="1102" r="2.5"/><circle cx="1052" cy="1132" r="2.8"/><circle cx="863" cy="1157" r="2.5"/><circle cx="734" cy="1095" r="2.8"/><circle cx="912" cy="1065" r="2.2"/><circle cx="977" cy="1112" r="2.8"/><circle cx="1082" cy="1146" r="2.8"/><circle cx="981" cy="1100" r="2.5"/><circle cx="1001" cy="1059" r="2.5"/><circle cx="988" cy="1055" r="2.5"/><circle cx="723" cy="1130" r="2.5"/><circle cx="807" cy="1151" r="2.8"/><circle cx="730" cy="1129" r="2.5"/><circle cx="986" cy="1087" r="2.8"/><circle cx="776" cy="1151" r="2.5"/><circle cx="759" cy="1119" r="2.8"/><circle cx="910" cy="1101" r="2.2"/><circle cx="1269" cy="1134" r="2.5"/><circle cx="1169" cy="1150" r="2.8"/><circle cx="1111" cy="1126" r="2.2"/><circle cx="843" cy="1090" r="2.5"/><circle cx="933" cy="1129" r="2.8"/></g>
<g fill="#ffffff"><path d="M770.5,190.5L776,193L771.5,195.5Z"/><circle cx="843" cy="205" r="1.3"/><circle cx="967" cy="197" r="1.3"/><circle cx="773" cy="250" r="1.3"/><path d="M755.5,298.5L761,301L756.5,303.5Z"/><circle cx="751" cy="357" r="1.3"/><circle cx="746" cy="455" r="1.3"/><circle cx="1044" cy="231" r="1.3"/><path d="M950.5,266.5L956,269L951.5,271.5Z"/><circle cx="907" cy="327" r="1.3"/><path d="M1097.5,186.5L1103,189L1098.5,191.5Z"/><circle cx="1182" cy="204" r="1.3"/><circle cx="1311" cy="186" r="1.3"/><circle cx="1365" cy="195" r="1.3"/><path d="M1422.5,207.5L1428,210L1423.5,212.5Z"/><circle cx="1227" cy="217" r="1.3"/><circle cx="1303" cy="361" r="1.3"/><circle cx="1348" cy="422" r="1.3"/><circle cx="1313" cy="462" r="1.3"/><circle cx="1383" cy="482" r="1.3"/><circle cx="1276" cy="319" r="1.3"/><path d="M745.5,499.5L751,502L746.5,504.5Z"/><circle cx="818" cy="620" r="1.3"/><path d="M791.5,652.5L797,655L792.5,657.5Z"/><circle cx="872" cy="668" r="1.3"/><path d="M849.5,731.5L855,734L850.5,736.5Z"/><circle cx="746" cy="748" r="1.3"/><circle cx="1341" cy="524" r="1.3"/><path d="M1379.5,582.5L1385,585L1380.5,587.5Z"/><path d="M1297.5,677.5L1303,680L1298.5,682.5Z"/><path d="M899.5,387.5L905,390L900.5,392.5Z"/><circle cx="1201" cy="262" r="1.3"/><circle cx="1260" cy="240" r="1.3"/></g>
<!-- DREAMS frame -->
<g fill="#fff" stroke="#fff" stroke-width="1.4" stroke-linejoin="round" font-family="Liberation Sans" font-weight="bold" font-size="49">
<text x="827" y="372">D</text><text x="876" y="372">R</text><text x="922" y="372" textLength="27" lengthAdjust="spacingAndGlyphs">E</text>
<text x="824" y="432">A</text><text x="872" y="432">M</text><text x="927" y="432" textLength="29" lengthAdjust="spacingAndGlyphs">S</text>
</g>
<text x="1332" y="272" fill="#fff" stroke="#fff" stroke-width="0.8" font-family="Liberation Sans" font-weight="bold" font-size="25">#</text>
<text x="1354" y="272" fill="#fff" stroke="#fff" stroke-width="0.8" font-family="Liberation Sans" font-weight="bold" font-size="25">1</text>
<g fill="#fff" stroke="#fff" stroke-width="0.9" font-family="Liberation Sans" font-weight="bold" font-size="20" text-anchor="middle">
<text x="849" y="809">f</text><text x="850" y="864">u</text><text x="849" y="917">t</text><text x="850" y="971">u</text><text x="849" y="1025">r</text><text x="850" y="1079">e</text>
</g>
<g fill="#fff" font-family="Liberation Sans" font-weight="bold" font-size="10" text-anchor="middle">
<text x="1354" y="521">D</text><text x="1354" y="565">E</text><text x="1354" y="609">S</text><text x="1353" y="653">I</text><text x="1354" y="697">G</text><text x="1354" y="741">N</text>
</g>
<g fill="#e8f6f6" font-family="Liberation Sans" font-size="11" font-weight="bold"><text x="1270" y="398">n</text><text x="1295" y="398">s</text></g>
<text x="1264" y="1009" fill="#c4eaea" font-family="Liberation Sans" font-size="39" letter-spacing="-1.5" textLength="58">ans</text>
<text x="1268" y="1055" fill="#f2fbfb" stroke="#f2fbfb" stroke-width="0.6" font-family="Liberation Sans" font-weight="bold" font-size="34" textLength="125">ave 2.0</text>
<text x="1233" y="1085" fill="#b9dfdc" font-family="Liberation Sans" font-size="19" textLength="160">30 November 2021</text>
<!-- frame line -->
<rect x="718.5" y="161.5" width="715.5" height="1001" fill="none" stroke="#aa9c68" stroke-width="1.2"/>
</svg>
<!-- handles -->
<div class="abs hd" style="left:714px;top:157px"></div>
<div class="abs hd" style="left:1072px;top:157px"></div>
<div class="abs hd" style="left:1430px;top:157px"></div>
<div class="abs hd" style="left:714px;top:658px"></div>
<div class="abs hd" style="left:1430px;top:658px"></div>
<div class="abs hd" style="left:714px;top:1159px"></div>
<div class="abs hd" style="left:1072px;top:1159px"></div>
<div class="abs hd" style="left:1430px;top:1159px"></div>

<!-- MENU -->
<div id="menu" class="abs">
<svg class="abs" style="left:0;top:0" width="294" height="745" viewBox="976 320 294 745"><defs><filter id="mblur" x="-20%" y="-20%" width="140%" height="140%"><feGaussianBlur stdDeviation="38"/><feColorMatrix type="saturate" values="1.15"/></filter></defs><use href="#pbase" filter="url(#mblur)"/></svg>
<div id="mwash" class="abs"></div>
<div class="abs" style="left:6px;top:438px;width:282px;height:26px;border-radius:5px;background:#4584e4"></div>
<div class="it" style="top:6px">Cut<span class="sc"><i>⌘</i><i>X</i></span></div>
<div class="it" style="top:32px">Copy<span class="sc"><i>⌘</i><i>C</i></span></div>
<div class="it" style="top:58px">Paste<span class="sc"><i>⌘</i><i>V</i></span></div>
<div class="it" style="top:85px">Paste Into<span class="sc"><i class="o">⌥</i><i>⌘</i><i>V</i></span></div>
<div class="it" style="top:111px">Paste in Place<span class="sc"><i class="o">⌥</i><i>⇧</i><i>⌘</i><i>V</i></span></div>
<div class="it" style="top:137px">Search Adobe Stock...</div>
<div class="sep" style="top:169px"></div>
<div class="it" style="top:176px">Zoom<svg class="ch" viewBox="0 0 12 12"><path d="M5,0.8L10.2,6L5,11.2" fill="none" stroke="#111" stroke-width="2.2" stroke-linecap="round" stroke-linejoin="round"/></svg></div>
<div class="sep" style="top:209px"></div>
<div class="it" style="top:215px">Transform<svg class="ch" viewBox="0 0 12 12"><path d="M5,0.8L10.2,6L5,11.2" fill="none" stroke="#111" stroke-width="2.2" stroke-linecap="round" stroke-linejoin="round"/></svg></div>
<div class="it" style="top:242px">Transform Again<svg class="ch" viewBox="0 0 12 12"><path d="M5,0.8L10.2,6L5,11.2" fill="none" stroke="#111" stroke-width="2.2" stroke-linecap="round" stroke-linejoin="round"/></svg></div>
<div class="it" style="top:268px">Select<svg class="ch" viewBox="0 0 12 12"><path d="M5,0.8L10.2,6L5,11.2" fill="none" stroke="#111" stroke-width="2.2" stroke-linecap="round" stroke-linejoin="round"/></svg></div>
<div class="sep" style="top:301px"></div>
<div class="it" style="top:307px">Hide<span class="sc"><i>⌘</i><i>3</i></span></div>
<div class="sep" style="top:340px"></div>
<div class="it" style="top:346px">Fitting<svg class="ch" viewBox="0 0 12 12"><path d="M5,0.8L10.2,6L5,11.2" fill="none" stroke="#111" stroke-width="2.2" stroke-linecap="round" stroke-linejoin="round"/></svg></div>
<div class="sep" style="top:379px"></div>
<div class="it" style="top:386px">Effects<svg class="ch" viewBox="0 0 12 12"><path d="M5,0.8L10.2,6L5,11.2" fill="none" stroke="#111" stroke-width="2.2" stroke-linecap="round" stroke-linejoin="round"/></svg></div>
<div class="it" style="top:412px">Captions<svg class="ch" viewBox="0 0 12 12"><path d="M5,0.8L10.2,6L5,11.2" fill="none" stroke="#111" stroke-width="2.2" stroke-linecap="round" stroke-linejoin="round"/></svg></div>
<div class="it" style="top:438px;color:#fff">Extract from Image<svg class="ch" viewBox="0 0 12 12"><path d="M5,0.8L10.2,6L5,11.2" fill="none" stroke="#fff" stroke-width="1.9" stroke-linecap="round" stroke-linejoin="round"/></svg></div>
<div class="it" style="top:464px">Find Similar Images</div>
<div class="it" style="top:490px">Hyperlinks<svg class="ch" viewBox="0 0 12 12"><path d="M5,0.8L10.2,6L5,11.2" fill="none" stroke="#111" stroke-width="2.2" stroke-linecap="round" stroke-linejoin="round"/></svg></div>
<div class="it" style="top:517px">Interactive<svg class="ch" viewBox="0 0 12 12"><path d="M5,0.8L10.2,6L5,11.2" fill="none" stroke="#111" stroke-width="2.2" stroke-linecap="round" stroke-linejoin="round"/></svg></div>
<div class="it" style="top:543px">Generate QR Code...</div>
<div class="it" style="top:569px">Object Export Options...</div>
<div class="sep" style="top:601px"></div>
<div class="it" style="top:608px">Tag Frame<svg class="ch" viewBox="0 0 12 12"><path d="M5,0.8L10.2,6L5,11.2" fill="none" stroke="#111" stroke-width="2.2" stroke-linecap="round" stroke-linejoin="round"/></svg></div>
<div class="it" style="top:634px">Autotag</div>
<div class="sep" style="top:667px"></div>
<div class="it" style="top:674px">Display Performance<svg class="ch" viewBox="0 0 12 12"><path d="M5,0.8L10.2,6L5,11.2" fill="none" stroke="#111" stroke-width="2.2" stroke-linecap="round" stroke-linejoin="round"/></svg></div>
<div class="sep" style="top:706px"></div>
<div class="it" style="top:713px">Graphics<svg class="ch" viewBox="0 0 12 12"><path d="M5,0.8L10.2,6L5,11.2" fill="none" stroke="#111" stroke-width="2.2" stroke-linecap="round" stroke-linejoin="round"/></svg></div>
</div>
<div id="sub" class="abs">
<div class="it" style="left:16px;top:6px;width:110px">Color Themes</div>
<div class="it" style="left:16px;top:32px;width:110px">Shapes</div>
<div class="it" style="left:16px;top:58px;width:110px">Type</div>
</div>
</body></html>
